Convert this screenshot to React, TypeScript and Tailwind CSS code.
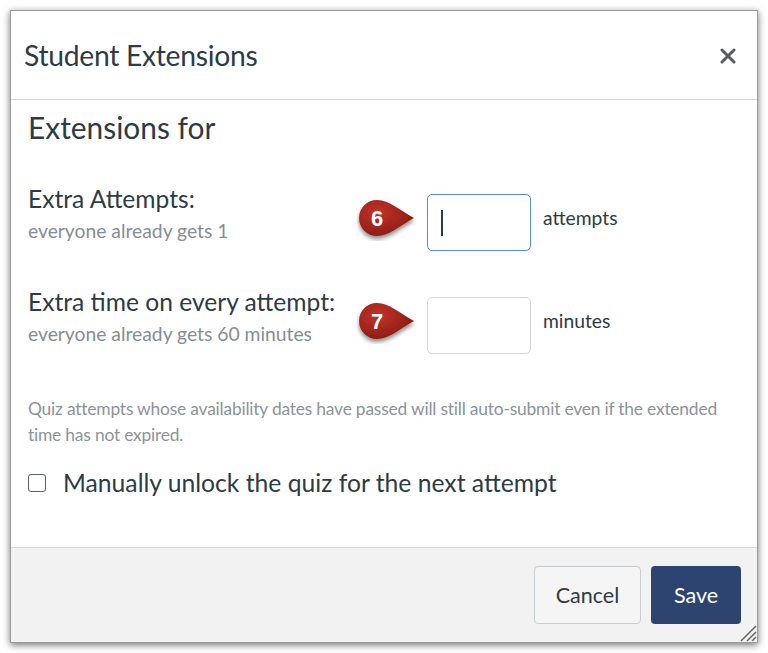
import React from 'react'

const font = { fontFamily: 'Lato, "Open Sans", sans-serif' }

function Badge({ n }: { n: string }) {
  return (
    <div className="relative w-[62px] h-[44px] shrink-0">
      <svg width="62" height="44" viewBox="0 0 62 44" className="absolute inset-0">
        <defs>
          <radialGradient id={`g${n}`} cx="0.35" cy="0.35" r="0.7">
            <stop offset="0" stopColor="#c0342a" />
            <stop offset="1" stopColor="#8c1a13" />
          </radialGradient>
          <filter id={`s${n}`} x="-20%" y="-20%" width="150%" height="160%">
            <feDropShadow dx="0" dy="3" stdDeviation="2" floodColor="#000" floodOpacity="0.45" />
          </filter>
        </defs>
        <path
          d="M22 3 A18 18 0 1 0 22 39 C 34 39 46 28 59 21 C 46 14 34 3 22 3 Z"
          fill={`url(#g${n})`}
          filter={`url(#s${n})`}
        />
      </svg>
      <span
        className="absolute left-0 top-0 w-[44px] h-[42px] flex items-center justify-center text-white text-[22px] font-bold"
        style={{ fontFamily: '"Liberation Sans", Arial, sans-serif' }}
      >
        {n}
      </span>
    </div>
  )
}

function Row({
  label,
  sub,
  n,
  unit,
  focused,
}: {
  label: string
  sub: string
  n: string
  unit: string
  focused?: boolean
}) {
  return (
    <div className="flex items-start">
      <div className="w-[327px] shrink-0">
        <div className="text-[24.6px] leading-[28px] text-[#2d3b45]">{label}</div>
        <div className="mt-[6px] text-[19.3px] leading-[24px] text-[#858e95]">{sub}</div>
      </div>
      <div className="mt-[12px]">
        <Badge n={n} />
      </div>
      <div
        className={`ml-[10px] mt-[9px] w-[104px] h-[57px] rounded-[5px] bg-white border flex items-center pl-[13px] ${
          focused ? 'border-[#5b8ccf]' : 'border-[#d3d7da]'
        }`}
      >
        {focused && <div className="w-[2px] h-[26px] bg-[#2d3b45]" />}
      </div>
      <div className="ml-[12px] mt-[21px] text-[19.3px] leading-[24px] text-[#2d3b45]">{unit}</div>
    </div>
  )
}

export default function App() {
  return (
    <div className="w-[768px] h-[653px] bg-white pt-[10px] pl-[10px]" style={font}>
      <div className="relative w-[748px] h-[633px] bg-white flex flex-col border border-[#9a9a9a] shadow-[0_2px_7px_rgba(0,0,0,0.55)]">
        {/* header */}
        <div className="h-[89px] shrink-0 flex items-center justify-between pl-[13px] pr-[21px] border-b border-[#d6d9dc]">
          <h2 className="text-[28.3px] text-[#2d3b45] tracking-[-0.3px]">Student Extensions</h2>
          <svg width="16" height="16" viewBox="0 0 16 16" className="mt-[2px]">
            <path d="M2 2 L14 14 M14 2 L2 14" stroke="#555b60" strokeWidth="3" strokeLinecap="round" />
          </svg>
        </div>

        {/* body */}
        <div className="flex-1 pl-[17px] pr-[20px] pt-[9px]">
          <h3 className="text-[29.9px] leading-[36px] text-[#2d3b45]">Extensions for</h3>
          <div className="mt-[40px]">
            <Row label="Extra Attempts:" sub="everyone already gets 1" n="6" unit="attempts" focused />
          </div>
          <div className="mt-[37px]">
            <Row
              label="Extra time on every attempt:"
              sub="everyone already gets 60 minutes"
              n="7"
              unit="minutes"
            />
          </div>
          <p className="mt-[42px] text-[17.4px] leading-[26px] text-[#8b949a] tracking-[-0.2px] whitespace-nowrap">
            Quiz attempts whose availability dates have passed will still auto-submit even if the extended
            <br />
            time has not expired.
          </p>
          <label className="mt-[20px] flex items-center">
            <span className="w-[18px] h-[18px] border-[1.5px] border-[#5a6166] rounded-[3px] bg-white" />
            <span className="ml-[17px] text-[24.7px] leading-[30px] text-[#2d3b45]">
              Manually unlock the quiz for the next attempt
            </span>
          </label>
        </div>

        {/* footer */}
        <div className="h-[95px] shrink-0 bg-[#f2f2f2] border-t border-[#d6d9dc] flex items-start justify-end pt-[18px] pr-[16px] gap-[10px]">
          <button className="w-[107px] h-[58px] rounded-[4px] bg-[#f5f5f5] border border-[#c7cdd1] text-[21.5px] text-[#2d3b45]">
            Cancel
          </button>
          <button className="w-[90px] h-[58px] rounded-[4px] bg-[#2c446f] text-[21.5px] text-white">Save</button>
        </div>

        <svg width="20" height="20" viewBox="0 0 20 20" className="absolute right-0 bottom-0">
          <path d="M19 4 L4 19 M19 10 L10 19 M19 15 L15 19" stroke="#666" strokeWidth="1.5" />
        </svg>
      </div>
    </div>
  )
}
